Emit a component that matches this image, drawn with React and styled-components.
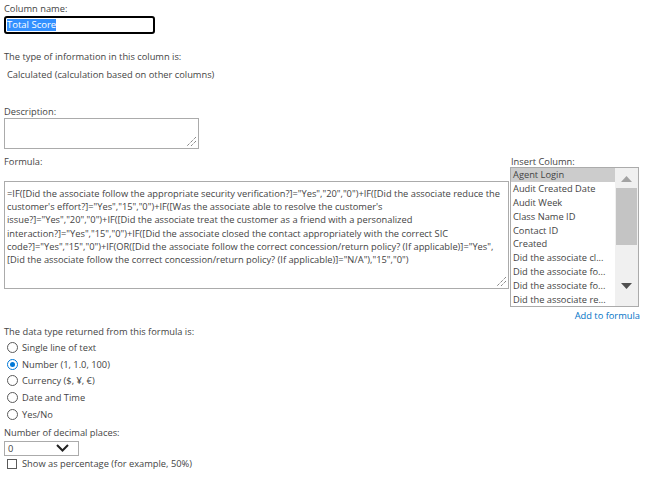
import React from "react";
import styled, { createGlobalStyle } from "styled-components";

const Global = createGlobalStyle`
  html, body { margin: 0; padding: 0; background: #fff; }
  body { font-family: "Open Sans", "Noto Sans", sans-serif; font-size: 9.3px; color: #444; }
`;

const Page = styled.div`
  width: 645px;
  height: 477px;
  padding: 2px 0 0 4px;
  box-sizing: border-box;
  display: flex;
  flex-direction: column;
  overflow: hidden;
`;

const Label = styled.div`
  line-height: 13px;
  height: 13px;
  white-space: nowrap;
  margin-top: ${(p) => p.$mt || 0}px;
  padding-left: ${(p) => p.$pl || 0}px;
`;

const NameInput = styled.div`
  margin-top: 1px;
  width: 151px;
  height: 18px;
  box-sizing: border-box;
  border: 2px solid #000;
  border-radius: 3px;
  padding: 0 1px;
  display: flex;
  align-items: center;
`;

const Selected = styled.span`
  background: #3390ff;
  color: #fff;
  line-height: 12px;
  font-size: 9.5px;
`;

const Box = styled.div`
  position: relative;
  box-sizing: border-box;
  border: 1px solid #ababab;
  background: #fff;
  width: ${(p) => p.$w}px;
  height: ${(p) => p.$h}px;
  margin-top: ${(p) => p.$mt || 0}px;
`;

const GripWrap = styled.svg`
  position: absolute;
  right: 1px;
  bottom: 1px;
`;

const Grip = () => (
  <GripWrap width="11" height="11" viewBox="0 0 11 11">
    <path d="M10 1 L1 10 M10 5 L5 10" stroke="#555" strokeWidth="1" strokeDasharray="1 1" />
  </GripWrap>
);

const FormulaRow = styled.div`
  display: flex;
  margin-top: 6px;
`;

const LeftCol = styled.div`
  display: flex;
  flex-direction: column;
`;

const RightCol = styled.div`
  display: flex;
  flex-direction: column;
  margin-left: 1px;
  width: 130px;
`;

const FormulaText = styled.div`
  padding: 5px 0 0 2px;
  line-height: 13.2px;
  white-space: nowrap;
`;

const ListBox = styled.div`
  margin-top: -1px;
  width: 129px;
  height: 140px;
  box-sizing: border-box;
  border: 1px solid #ababab;
  display: flex;
  overflow: hidden;
`;

const Items = styled.div`
  flex: 1;
  display: flex;
  flex-direction: column;
  overflow: hidden;
`;

const Item = styled.div`
  height: 13.9px;
  line-height: 14px;
  flex: none;
  padding-left: 2px;
  white-space: nowrap;
  overflow: hidden;
  background: ${(p) => (p.$sel ? "#cccccc" : "transparent")};
  color: #444;
`;

const Scroll = styled.div`
  width: 23px;
  background: #f0f0f0;
  display: flex;
  flex-direction: column;
  align-items: center;
`;

const Arrow = styled.svg`
  margin-top: ${(p) => p.$mt || 0}px;
`;

const Thumb = styled.div`
  margin-top: 6px;
  width: 21px;
  height: 57px;
  background: #c4c4c4;
`;

const LinkRow = styled.div`
  display: flex;
  justify-content: flex-end;
  margin-top: 2px;
  line-height: 13px;
  white-space: nowrap;
`;

const Link = styled.a`
  color: #0072c6;
  text-decoration: none;
`;

const Radios = styled.div`
  display: flex;
  flex-direction: column;
  margin-top: 1px;
  padding-left: 3px;
`;

const RadioRow = styled.label`
  display: flex;
  align-items: center;
  height: 16.75px;
  gap: 4px;
`;

const RadioCircle = styled.span`
  width: 9px;
  height: 9px;
  border-radius: 50%;
  border: 1px solid ${(p) => (p.$on ? "#0078d7" : "#5a5a5a")};
  display: flex;
  align-items: center;
  justify-content: center;
  &::after {
    content: "";
    width: 5px;
    height: 5px;
    border-radius: 50%;
    background: ${(p) => (p.$on ? "#0078d7" : "transparent")};
  }
`;

const Select = styled.div`
  margin-top: 2px;
  width: 75px;
  height: 15px;
  box-sizing: border-box;
  border: 1px solid #ababab;
  display: flex;
  align-items: center;
  justify-content: space-between;
  padding: 0 9px 0 3px;
`;

const CheckRow = styled.label`
  display: flex;
  align-items: center;
  gap: 5px;
  padding-left: 3px;
  margin-top: 1px;
  height: 14px;
`;

const CheckBox = styled.span`
  width: 8px;
  height: 8px;
  border: 1px solid #5a5a5a;
`;

const formulaLines = [
  '=IF([Did the associate follow the appropriate security verification?]="Yes","20","0")+IF([Did the associate reduce the',
  "customer's effort?]=\"Yes\",\"15\",\"0\")+IF([Was the associate able to resolve the customer's",
  'issue?]="Yes","20","0")+IF([Did the associate treat the customer as a friend with a personalized',
  'interaction?]="Yes","15","0")+IF([Did the associate closed the contact appropriately with the correct SIC',
  'code?]="Yes","15","0")+IF(OR([Did the associate follow the correct concession/return policy? (If applicable)]="Yes",',
  '[Did the associate follow the correct concession/return policy? (If applicable)]="N/A"),"15","0")',
];

const columns = [
  "Agent Login",
  "Audit Created Date",
  "Audit Week",
  "Class Name ID",
  "Contact ID",
  "Created",
  "Did the associate cl...",
  "Did the associate fo...",
  "Did the associate fo...",
  "Did the associate re...",
];

const types = [
  "Single line of text",
  "Number (1, 1.0, 100)",
  "Currency ($, ¥, €)",
  "Date and Time",
  "Yes/No",
];

export default function App() {
  return (
    <>
      <Global />
      <Page>
        <Label>Column name:</Label>
        <NameInput>
          <Selected>Total Score</Selected>
        </NameInput>
        <Label $mt={16}>The type of information in this column is:</Label>
        <Label $mt={5} $pl={3}>Calculated (calculation based on other columns)</Label>
        <Label $mt={24}>Description:</Label>
        <Box $w={195} $h={31}>
          <Grip />
        </Box>
        <FormulaRow>
          <LeftCol>
            <Label>Formula:</Label>
            <Box $w={505} $h={108} $mt={13}>
              <FormulaText>
                {formulaLines.map((l, i) => (
                  <div key={i}>{l}</div>
                ))}
              </FormulaText>
              <Grip />
            </Box>
          </LeftCol>
          <RightCol>
            <Label $pl={1}>Insert Column:</Label>
            <ListBox>
              <Items>
                {columns.map((c, i) => (
                  <Item key={i} $sel={i === 0}>
                    {c}
                  </Item>
                ))}
              </Items>
              <Scroll>
                <Arrow $mt={8} width="11" height="6" viewBox="0 0 11 6">
                  <path d="M0 6 L5.5 0 L11 6 Z" fill="#a3a3a3" />
                </Arrow>
                <Thumb />
                <Arrow $mt={38} width="11" height="6" viewBox="0 0 11 6">
                  <path d="M0 0 L5.5 6 L11 0 Z" fill="#505050" />
                </Arrow>
              </Scroll>
            </ListBox>
            <LinkRow>
              <Link href="#">Add to formula</Link>
            </LinkRow>
          </RightCol>
        </FormulaRow>
        <Label $mt={3}>The data type returned from this formula is:</Label>
        <Radios>
          {types.map((t, i) => (
            <RadioRow key={t}>
              <RadioCircle $on={i === 1} />
              {t}
            </RadioRow>
          ))}
        </Radios>
        <Label $mt={3}>Number of decimal places:</Label>
        <Select>
          <span>0</span>
          <svg width="13" height="8" viewBox="0 0 13 8">
            <path d="M1 1 L6.5 6.5 L12 1" stroke="#222" strokeWidth="2" fill="none" />
          </svg>
        </Select>
        <CheckRow>
          <CheckBox />
          Show as percentage (for example, 50%)
        </CheckRow>
      </Page>
    </>
  );
}
